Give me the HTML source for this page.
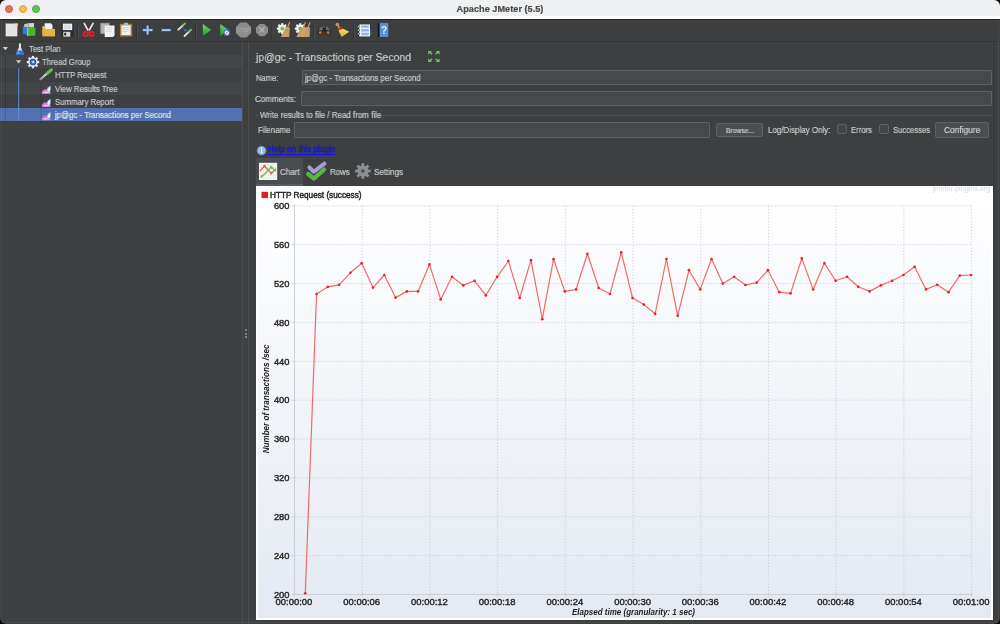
<!DOCTYPE html>
<html><head><meta charset="utf-8">
<style>
*{margin:0;padding:0;box-sizing:border-box}
html,body{width:1000px;height:624px;overflow:hidden;background:#000}
body{font-family:"Liberation Sans",sans-serif;position:relative}
.a{position:absolute}
svg{will-change:transform}
#win{position:absolute;left:0;top:0;width:1000px;height:624px;background:#3d3f41;border-radius:6px;overflow:hidden}
#title{left:0;top:0;width:1000px;height:19px;background:linear-gradient(#eff0f2 0,#eff0f2 16px,#f8f8f9 16px,#fdfdfd 17px,#fff 18px,#fff 18.6px,#232425 18.6px)}
#title .t{will-change:transform;left:0;top:4px;width:1000px;text-align:center;font-weight:bold;font-size:9.2px;color:#4a4a4a;line-height:11px}
.dot{width:8.4px;height:8.4px;border-radius:50%;top:5.1px}
#tb{left:0;top:19px;width:1000px;height:23px;background:#3d3e40;border-top:1px solid #232425;border-bottom:1px solid #363739}
.lbl{color:#bdbdbd;font-size:7.9px;line-height:10px;white-space:nowrap}
.field{background:#45494a;border:1px solid #5e6163;border-radius:1px}
.btn{border:1px solid #5e6163;border-radius:2px;background:#4a4e50;color:#bbbbbb;text-align:center}
.cb{width:10px;height:10px;border:1px solid #5e6163;border-radius:2px;background:#43474a}
.row{left:0;width:242px;height:13.2px}
.t{line-height:12px;white-space:nowrap;transform-origin:0 50%;will-change:transform;-webkit-text-stroke:0.2px currentColor}
</style></head><body>
<div id="win">
 <div id="title" class="a">
  <div class="a dot" style="left:5.1px;background:#ec6a5e;border:0.5px solid #d8564a"></div>
  <div class="a dot" style="left:18.6px;background:#f4bf4f;border:0.5px solid #dca13a"></div>
  <div class="a dot" style="left:31.8px;background:#61c554;border:0.5px solid #4ea83f"></div>
  <div class="a t">Apache JMeter (5.5)</div>
 </div>
 <div id="tb" class="a"></div>
<svg class="a" style="left:0;top:18px" width="400" height="24" viewBox="0 18 400 24">
<defs>
<linearGradient id="gGreen" x1="0" y1="0" x2="0" y2="1"><stop offset="0" stop-color="#7ed66a"/><stop offset="1" stop-color="#1f9a2a"/></linearGradient>
<linearGradient id="gFold" x1="0" y1="0" x2="0" y2="1"><stop offset="0" stop-color="#f2cc5a"/><stop offset="1" stop-color="#c8901e"/></linearGradient>
<linearGradient id="gBroom" x1="0" y1="0" x2="0" y2="1"><stop offset="0" stop-color="#f6e27a"/><stop offset="1" stop-color="#d9b224"/></linearGradient>
</defs>
<!-- separators -->
<g fill="#2f3133"><rect x="77" y="22.5" width="1" height="16"/><rect x="136" y="22.5" width="1" height="16"/><rect x="195" y="22.5" width="1" height="16"/><rect x="271.5" y="22.5" width="1" height="16"/><rect x="313" y="22.5" width="1" height="16"/><rect x="353" y="22.5" width="1" height="16"/></g>
<g fill="#4a4c4f"><rect x="78" y="22.5" width="1" height="16"/><rect x="137" y="22.5" width="1" height="16"/><rect x="196" y="22.5" width="1" height="16"/><rect x="272.5" y="22.5" width="1" height="16"/><rect x="314" y="22.5" width="1" height="16"/><rect x="354" y="22.5" width="1" height="16"/></g>
<!-- 1 new -->
<rect x="5.8" y="23.6" width="11.4" height="12.6" fill="#ececec" stroke="#9a9a9a" stroke-width="0.4"/>
<rect x="6.8" y="24.6" width="9.4" height="10.6" fill="#e2e2e2"/>
<circle cx="16.2" cy="25" r="1.8" fill="#f5e27a" opacity="0.9"/>
<!-- 2 templates -->
<path d="M24 24.5 L28.5 23 L28.5 27 L24 28Z" fill="#c8c8c8"/>
<path d="M28.5 23.2 L34 23 L34 27.5 L28.5 27.5Z" fill="#d4d4d4"/>
<path d="M22.9 26.5 L27.2 27 L27.4 35 L23 34Z" fill="#2f7fd6"/>
<path d="M27 27.4 L35.5 27.8 L35.3 35.5 L27.4 36.3Z" fill="#4fb52e"/>
<rect x="27" y="27.5" width="1.2" height="8.5" fill="#8ad46a"/>
<!-- 3 open -->
<path d="M44.6 23.3 L51 23.3 L52.5 25 L52.5 30 L44.6 30Z" fill="#f2f2f2"/>
<path d="M42.3 26.2 L45.5 26.2 L45.5 29 L55 29 L55 36.2 L42.3 36.2Z" fill="url(#gFold)"/>
<path d="M42.1 30.5 L55 30 L55 36.2 L42.8 36.2Z" fill="#e5b53c"/>
<!-- 4 save -->
<rect x="61.1" y="23" width="12.5" height="13.7" rx="1" fill="#2c2c2c"/>
<rect x="62.8" y="23.6" width="9.4" height="6.5" fill="#f4f4f4"/>
<rect x="63.8" y="24.6" width="7.4" height="4.8" fill="#d6e0ea"/>
<rect x="63.3" y="31.8" width="7" height="4.9" fill="#d8d8d8"/>
<rect x="64.3" y="32.8" width="1.8" height="2.6" fill="#222"/>
<!-- 5 cut -->
<path d="M84.2 23.4 L88.6 31.4 M93 23.4 L88.6 31.4" fill="none" stroke="#ececec" stroke-width="1.7" stroke-linecap="round"/>
<circle cx="85.6" cy="33.9" r="2.1" fill="none" stroke="#dc2222" stroke-width="1.9"/>
<circle cx="91.5" cy="33.9" r="2.1" fill="none" stroke="#dc2222" stroke-width="1.9"/>
<path d="M87 32.2 L88.6 31 L90.2 32.2" fill="none" stroke="#cc1e1e" stroke-width="1.5"/>
<!-- 6 copy -->
<rect x="100.3" y="22.9" width="9.3" height="11" fill="#9c9c9c"/>
<rect x="101.3" y="23.9" width="7.3" height="9" fill="#b4b4b4"/>
<path d="M104.7 25.5 L114.5 25.5 L114.5 35.5 L113 37.1 L104.7 37.1Z" fill="#f4f4f4"/>
<g fill="#c8c8c8"><rect x="106" y="27.5" width="6" height="0.6"/><rect x="106" y="29.5" width="6" height="0.6"/><rect x="106" y="31.5" width="6" height="0.6"/></g>
<!-- 7 paste -->
<rect x="119.9" y="23.8" width="12.3" height="12.7" rx="1" fill="#b07a26"/>
<rect x="121.4" y="25.3" width="9.2" height="9.8" fill="#eef2f8"/>
<g fill="#c4c4c4"><rect x="122.5" y="27" width="6" height="0.7"/><rect x="122.5" y="29" width="6" height="0.7"/><rect x="122.5" y="31" width="5" height="0.7"/></g>
<rect x="123.8" y="22.8" width="4.4" height="2.6" rx="1" fill="#b4b4b4"/>
<!-- 8 plus -->
<g fill="#a9c8ef" stroke="#4a7ac0" stroke-width="0.3"><rect x="142.9" y="29" width="9.6" height="2.1"/><rect x="146.6" y="25.6" width="2.1" height="9"/></g>
<!-- 9 minus -->
<rect x="161.8" y="29" width="9" height="2.1" fill="#a9c8ef" stroke="#4a7ac0" stroke-width="0.3"/>
<!-- 10 toggle -->
<path d="M178.3 29.7 L183 25.3" stroke="#e8e8e8" stroke-width="1.8" stroke-linecap="round"/>
<path d="M183 25.3 L185 23.6" stroke="#7ac85a" stroke-width="1.9" stroke-linecap="round"/>
<path d="M184.5 36 L189 31.7" stroke="#e8e8e8" stroke-width="1.8" stroke-linecap="round"/>
<path d="M189 31.7 L191 29.8" stroke="#7ac85a" stroke-width="1.9" stroke-linecap="round"/>
<path d="M183.2 28 L185.5 30.5" stroke="#3a7ae0" stroke-width="0.9"/>
<circle cx="185.6" cy="30.6" r="1" fill="#3a7ae0"/>
<!-- 11 start -->
<path d="M202.8 24.1 L211.2 29.9 L202.8 35.9Z" fill="url(#gGreen)"/>
<!-- 12 start no pause -->
<path d="M220.3 24.1 L228.7 29.9 L220.3 35.9Z" fill="url(#gGreen)"/>
<circle cx="226.8" cy="32.8" r="2.8" fill="#f4f4f4" stroke="#2f6fd0" stroke-width="1.1"/>
<path d="M224 35.6 L229.4 30.2" stroke="#e0302a" stroke-width="0.9"/>
<!-- 13 stop -->
<path d="M240.4 22.6 L246.6 22.6 L251.1 27 L251.1 33 L246.6 37.4 L240.4 37.4 L235.9 33 L235.9 27Z" fill="#8c8c8c"/>
<text x="243.5" y="32.3" text-anchor="middle" font-family="Liberation Sans" font-weight="bold" font-size="5.2" fill="#a4a4a4">STOP</text>
<!-- 14 shutdown -->
<path d="M259.6 23.9 L264.4 23.9 L268 27.5 L268 32.6 L264.4 36.2 L259.6 36.2 L256 32.6 L256 27.5Z" fill="#8a8a8a"/>
<path d="M259.5 27.5 L264.5 32.5 M264.5 27.5 L259.5 32.5" stroke="#b0b0b0" stroke-width="1.4"/>
<!-- 15 clear -->
<g transform="translate(282.2,28.6)"><circle r="4.2" fill="#eeeeee"/><g fill="#eeeeee"><rect x="-1.1" y="-5.4" width="2.2" height="10.8"/><rect x="-5.4" y="-1.1" width="10.8" height="2.2"/><rect x="-1.1" y="-5.4" width="2.2" height="10.8" transform="rotate(45)"/><rect x="-1.1" y="-5.4" width="2.2" height="10.8" transform="rotate(-45)"/></g><circle r="1.8" fill="#5cbc2c"/><circle r="0.7" cx="-0.4" cy="-0.5" fill="#a8e880"/></g>
<path d="M289.6 22.6 L287.6 27.5" stroke="#c49a64" stroke-width="1.3" stroke-linecap="round"/>
<path d="M285.6 27 L289.8 27.6 L289.2 37 L280.8 37 L282.6 33Z" fill="#c8a674"/>
<path d="M286 29 L283.5 36.5 M287.5 29 L286.5 36.5 M288.8 29 L288.5 36.5" stroke="#a88656" stroke-width="0.4"/>
<!-- 16 clear all -->
<g transform="translate(300.2,28.6)"><circle r="4.2" fill="#eeeeee"/><g fill="#eeeeee"><rect x="-1.1" y="-5.4" width="2.2" height="10.8"/><rect x="-5.4" y="-1.1" width="10.8" height="2.2"/><rect x="-1.1" y="-5.4" width="2.2" height="10.8" transform="rotate(45)"/><rect x="-1.1" y="-5.4" width="2.2" height="10.8" transform="rotate(-45)"/></g><circle r="1.8" fill="#5cbc2c"/></g>
<path d="M305.2 22.6 L303.4 27.5 M309.8 22.6 L308 27.5" stroke="#c49a64" stroke-width="1.3" stroke-linecap="round"/>
<path d="M301.4 27 L305.4 27.6 L305 37 L296.4 37 L298.4 33Z" fill="#c8a674"/>
<path d="M306 27 L310 27.6 L309.6 37 L301.2 37 L303 33Z" fill="#c4a270"/>
<path d="M302 29 L299.5 36.5 M307.5 29 L305 36.5 M309 29 L308.5 36.5" stroke="#a88656" stroke-width="0.4"/>
<!-- 17 binoculars -->
<path d="M317 32.6 L320.4 26 Q321.8 25 323.3 26.2 L323.8 33 Q323.4 35.6 320.3 35.4 Q316.8 35.2 317 32.6Z" fill="#2e2e2e"/>
<path d="M331.7 32.6 L328.3 26 Q326.9 25 325.4 26.2 L324.9 33 Q325.3 35.6 328.4 35.4 Q331.9 35.2 331.7 32.6Z" fill="#2e2e2e"/>
<path d="M318.6 30.6 L320.8 26.6 Q321.8 26 322.6 26.8 L322.8 30Z" fill="#6a6a6a"/>
<path d="M330.1 30.6 L327.9 26.6 Q326.9 26 326.1 26.8 L325.9 30Z" fill="#6a6a6a"/>
<rect x="323.2" y="26.8" width="2.3" height="4.5" fill="#222"/>
<circle cx="324.35" cy="27" r="1.1" fill="#555"/>
<circle cx="320.4" cy="32.7" r="1.8" fill="#a0521e"/><circle cx="328.3" cy="32.7" r="1.8" fill="#a0521e"/>
<circle cx="320.1" cy="32.3" r="0.6" fill="#e8a060"/><circle cx="328" cy="32.3" r="0.6" fill="#e8a060"/>
<!-- 18 broom -->
<circle cx="337.4" cy="24.5" r="1.8" fill="#c8985a"/>
<path d="M337.5 25 L339.8 28.5" stroke="#c8985a" stroke-width="1.6"/>
<path d="M337.2 28.8 L342 26.8 L343 29 L338.5 31Z" fill="#d42a20"/>
<path d="M338.5 30.5 L343 28.8 L349.3 31.8 L341.6 36.9Z" fill="url(#gBroom)"/>
<!-- 19 function helper -->
<rect x="358.4" y="23.8" width="12.2" height="13.3" rx="0.6" fill="#2a2a2a"/>
<rect x="359.2" y="24.4" width="10.8" height="12.1" fill="#f2f4f6"/>
<g fill="#8db4ee"><rect x="361.2" y="25.4" width="7.6" height="2.4"/><rect x="361.2" y="29.1" width="7.6" height="2.4"/><rect x="361.2" y="32.8" width="7.6" height="2.4"/></g>
<g fill="#fafafa" stroke="#1e1e1e" stroke-width="0.55"><circle cx="358.6" cy="26.4" r="1"/><circle cx="358.6" cy="30.1" r="1"/><circle cx="358.6" cy="33.8" r="1"/></g>
<rect x="370.3" y="29.4" width="1.1" height="2.6" fill="#2a62d8"/><rect x="370.3" y="32.2" width="1.1" height="2.6" fill="#2ca82c"/>
<!-- 20 help -->
<rect x="377.8" y="23.1" width="2.4" height="13.8" fill="#151515"/>
<rect x="379.6" y="23.1" width="8.7" height="13.8" fill="#5b8fd8"/>
<text x="384" y="33.6" text-anchor="middle" font-family="Liberation Sans" font-weight="bold" font-size="10" fill="#e4ecf8">?</text>
</svg>
 <!-- tree panel -->
 <div class="a row" style="top:55.2px;background:#414548"></div>
 <div class="a row" style="top:81.6px;background:#414548"></div>
 <div class="a row" style="top:108px;background:#5171b1"></div>
<svg class="a" style="left:0;top:0" width="250" height="130">
<defs>
<linearGradient id="gPip" x1="0" y1="1" x2="1" y2="0"><stop offset="0" stop-color="#9a9a9a"/><stop offset="1" stop-color="#f0f0f0"/></linearGradient>
</defs>
<!-- expand triangles -->
<path d="M2.7 47.1 L8.1 47.1 L5.4 50.2Z" fill="#cfcfcf"/>
<path d="M15.9 60.3 L21.3 60.3 L18.6 63.4Z" fill="#cfcfcf"/>
<!-- guide lines -->
<rect x="5" y="55" width="1" height="66" fill="#000" opacity="0.13"/>
<rect x="18.2" y="68" width="1" height="53" fill="#5b8fd0"/>
<rect x="40.5" y="82" width="1" height="39" fill="#000" opacity="0.13"/>
<!-- flask -->
<path d="M19 43.6 L20.9 43.2 L20.9 47.2 L23.6 53.6 Q24 55 22.6 55 L17 55 Q15.6 55 16 53.6 L19 47.2Z" fill="#dcdcdc"/>
<path d="M19.4 44 L20.4 44 L20.4 47.8 L19.4 47.8Z" fill="#f6f6f6"/>
<path d="M17.6 50.4 L22.1 50.4 L23.6 53.6 Q24 55 22.6 55 L17 55 Q15.6 55 16 53.6Z" fill="#2d6fd8"/>
<path d="M18.2 51.4 L20 51.4 L19.2 54 L17.2 54Z" fill="#6aa2ee"/>
<!-- gear -->
<g transform="translate(33,62.1)"><circle r="4.8" fill="#ededed"/><g fill="#ededed"><rect x="-1.1" y="-6.2" width="2.2" height="12.4"/><rect x="-6.2" y="-1.1" width="12.4" height="2.2"/><rect x="-1.1" y="-6.2" width="2.2" height="12.4" transform="rotate(45)"/><rect x="-1.1" y="-6.2" width="2.2" height="12.4" transform="rotate(-45)"/></g><circle r="3.3" fill="#2c4f8e"/><circle r="2.3" fill="#4f7cc4"/><circle r="1.1" cx="0.2" cy="-0.1" fill="#e6eef8"/></g>
<!-- pipette -->
<path d="M40.5 79.3 L47.5 73" stroke="url(#gPip)" stroke-width="2.2" stroke-linecap="round"/>
<path d="M47.3 73.3 L51.3 69.9" stroke="#6cb854" stroke-width="3.2" stroke-linecap="round"/>
<!-- chart icons -->
<g id="ci">
<path d="M41.8 93.9 L41.8 91.6 Q43.6 89.2 45.6 88.9 L50.4 91.2 L50.4 93.9Z" fill="#de6fd0"/>
<path d="M42.6 93.1 Q44.4 91.2 46 91.3 L49.8 92.6 L49.8 93.1Z" fill="#f4c6ee"/>
<path d="M50.5 85.5 Q46.9 87.3 46.7 90.3 Q46.8 92.4 48.9 92.3 Q50.5 92 50.5 89.8Z" fill="#8fb6e8"/>
<path d="M50.2 86.4 Q47.6 88 47.5 90.3 Q47.6 91.6 48.9 91.5 Q50.2 91.3 50.2 89.8Z" fill="#e8f2fc"/>
</g>
<use href="#ci" y="13.2"/>
<use href="#ci" y="26.4"/>
</svg>
 <div id="rcol" class="a" style="left:993px;top:42px;width:2px;height:582px;background:#393b3d"></div>
 <!-- splitter -->
 <div class="a" style="left:242px;top:42px;width:1px;height:582px;background:#4a4c4e"></div>
 <div class="a" style="left:248px;top:42px;width:1px;height:582px;background:#4a4c4e"></div>
 <div class="a" style="left:245px;top:329px;width:2px;height:2px;border-radius:1px;background:#9a9a9a"></div>
 <div class="a" style="left:245px;top:332.5px;width:2px;height:2px;border-radius:1px;background:#9a9a9a"></div>
 <div class="a" style="left:245px;top:336px;width:2px;height:2px;border-radius:1px;background:#9a9a9a"></div>

 <!-- right panel -->
 <svg class="a" style="left:426px;top:49px" width="16" height="15" viewBox="426 49 16 15">
  <g fill="#6cc85c">
   <path d="M428.2 51 L432 51 L430.9 52.1 L432.6 53.8 L431.6 54.8 L429.9 53.1 L428.2 54.8Z"/>
   <path d="M439.6 51 L435.8 51 L436.9 52.1 L435.2 53.8 L436.2 54.8 L437.9 53.1 L439.6 54.8Z"/>
   <path d="M428.2 62 L432 62 L430.9 60.9 L432.6 59.2 L431.6 58.2 L429.9 59.9 L428.2 58.2Z"/>
   <path d="M439.6 62 L435.8 62 L436.9 60.9 L435.2 59.2 L436.2 58.2 L437.9 59.9 L439.6 58.2Z"/>
  </g>
 </svg>
 <div class="a field" style="left:302px;top:70px;width:690px;height:15px"></div>
 <div class="a field" style="left:301px;top:91px;width:691px;height:15px"></div>
 <div class="a" style="left:256px;top:115px;width:3px;height:1px;background:#4f5254"></div>
 <div class="a" style="left:382px;top:115px;width:610px;height:1px;background:#4f5254"></div>
 <div class="a field" style="left:294px;top:122px;width:416px;height:16px"></div>
 <div class="a btn lbl" style="left:716px;top:123px;width:47px;height:14px;font-size:6.8px;line-height:12px"></div>
 <div class="a cb" style="left:837px;top:124px"></div>
 <div class="a cb" style="left:879px;top:124px"></div>
 <div class="a btn lbl" style="left:935px;top:122px;width:54px;height:16px;font-size:8.37px;line-height:14px"></div>

 <!-- help -->
 <svg class="a" style="left:255px;top:144px" width="14" height="14" viewBox="255 144 14 14">
  <circle cx="261.5" cy="150.6" r="4.4" fill="#9dbde6" stroke="#6c8fc4" stroke-width="0.6"/>
  <rect x="261" y="149.2" width="1.1" height="3.8" fill="#fff"/><circle cx="261.55" cy="147.9" r="0.65" fill="#fff"/>
 </svg>

 <!-- tabs -->
 <div class="a" style="left:256px;top:157.5px;width:46.5px;height:26.5px;background:#4a4d50"></div>
 <div class="a" style="left:256px;top:184px;width:46.5px;height:2px;background:#5a5d60"></div>
 <svg class="a" style="left:254px;top:156px" width="130" height="30" viewBox="254 156 130 30">
  <rect x="259" y="162.8" width="18.2" height="17.2" fill="#f7f7f7"/>
  <g stroke="#e2e2e2" stroke-width="0.5">
   <path d="M261 163v17M263.5 163v17M266 163v17M268.5 163v17M271 163v17M273.5 163v17M276 163v17"/>
   <path d="M259 165h18M259 167.5h18M259 170h18M259 172.5h18M259 175h18M259 177.5h18"/>
  </g>
  <polyline points="260,171.2 264.4,166 271.2,173.2 276,168.6" fill="none" stroke="#d86048" stroke-width="1.2"/>
  <polyline points="261.4,176.6 264.6,174.2 271.2,167.2 276,171.4" fill="none" stroke="#6ab84a" stroke-width="1.2"/>
  <g fill="none" stroke-width="0.8"><circle cx="264.4" cy="166" r="1" stroke="#d86048"/><circle cx="271.2" cy="173.2" r="1" stroke="#d86048"/><circle cx="271.2" cy="167.2" r="1" stroke="#6ab84a"/><circle cx="261.6" cy="176.4" r="1" stroke="#6ab84a"/></g>
  <path d="M309.4 167.4 L313.8 171.8 L324.4 163.6" fill="none" stroke="#a49ed8" stroke-width="3.9" stroke-linecap="round" stroke-linejoin="round"/>
  <path d="M308.2 174 L313.8 178.6 L324 169.6" fill="none" stroke="#58b446" stroke-width="4.3" stroke-linecap="round" stroke-linejoin="round"/>
  <g transform="translate(362.9,171)">
   <circle r="5.6" fill="#8b9192"/>
   <g fill="#8b9192"><rect x="-1.4" y="-7.8" width="2.8" height="15.6"/><rect x="-7.8" y="-1.4" width="15.6" height="2.8"/><rect x="-1.4" y="-7.8" width="2.8" height="15.6" transform="rotate(45)"/><rect x="-1.4" y="-7.8" width="2.8" height="15.6" transform="rotate(-45)"/></g>
   <circle r="3" fill="#7d8384"/><circle r="1.3" fill="#3a3c3e"/>
  </g>
 </svg>

 <!-- chart -->
 <div class="a" style="left:256px;top:186px;width:737px;height:434px;background:#fff"></div>
 <div class="a" style="left:258px;top:188px;width:733px;height:430px;background:linear-gradient(#ffffff,#e4e9f2)"></div>
 <div class="a t" style="left:28.60px;top:43.19px;font-size:8.4px;color:#cbcbcb;font-weight:normal;transform:scaleX(0.920);">Test Plan</div>
 <div class="a t" style="left:42.00px;top:56.39px;font-size:8.4px;color:#cbcbcb;font-weight:normal;transform:scaleX(0.930);">Thread Group</div>
 <div class="a t" style="left:55.20px;top:69.49px;font-size:8.4px;color:#cbcbcb;font-weight:normal;transform:scaleX(0.930);">HTTP Request</div>
 <div class="a t" style="left:55.20px;top:82.89px;font-size:8.4px;color:#cbcbcb;font-weight:normal;transform:scaleX(0.930);">View Results Tree</div>
 <div class="a t" style="left:55.20px;top:95.99px;font-size:8.4px;color:#cbcbcb;font-weight:normal;transform:scaleX(0.930);">Summary Report</div>
 <div class="a t" style="left:55.00px;top:109.19px;font-size:8.4px;color:#dfe5ee;font-weight:normal;transform:scaleX(0.936);">jp@gc - Transactions per Second</div>
 <div class="a t" style="left:255.60px;top:50.63px;font-size:11.45px;color:#d0d0d0;font-weight:normal;transform:scaleX(0.916);">jp@gc - Transactions per Second</div>
 <div class="a t" style="left:255.60px;top:72.09px;font-size:8.4px;color:#cbcbcb;font-weight:normal;transform:scaleX(0.905);">Name:</div>
 <div class="a t" style="left:305.00px;top:72.09px;font-size:8.4px;color:#cbcbcb;font-weight:normal;transform:scaleX(0.932);">jp@gc - Transactions per Second</div>
 <div class="a t" style="left:255.20px;top:93.09px;font-size:8.4px;color:#cbcbcb;font-weight:normal;transform:scaleX(0.959);">Comments:</div>
 <div class="a t" style="left:260.00px;top:108.89px;font-size:8.4px;color:#cbcbcb;font-weight:normal;transform:scaleX(0.948);">Write results to file / Read from file</div>
 <div class="a t" style="left:258.00px;top:123.89px;font-size:8.4px;color:#cbcbcb;font-weight:normal;transform:scaleX(0.944);">Filename</div>
 <div class="a t" style="left:725.50px;top:124.61px;font-size:7.2px;color:#cbcbcb;font-weight:normal;transform:scaleX(0.940);">Browse...</div>
 <div class="a t" style="left:767.80px;top:124.45px;font-size:8.8px;color:#cbcbcb;font-weight:normal;transform:scaleX(0.905);">Log/Display Only:</div>
 <div class="a t" style="left:850.90px;top:124.09px;font-size:8.4px;color:#cbcbcb;font-weight:normal;transform:scaleX(0.923);">Errors</div>
 <div class="a t" style="left:892.80px;top:124.09px;font-size:8.4px;color:#cbcbcb;font-weight:normal;transform:scaleX(0.916);">Successes</div>
 <div class="a t" style="left:944.00px;top:124.44px;font-size:9.4px;color:#d0d0d0;font-weight:normal;transform:scaleX(0.891);">Configure</div>
 <div class="a t" style="left:268.00px;top:144.36px;font-size:8.2px;color:#1212f4;font-weight:normal;transform:scaleX(0.998);text-decoration:underline;text-decoration-skip-ink:none;text-underline-offset:1.6px;-webkit-text-stroke:0.35px #1212f4;">Help on this plugin</div>
 <div class="a t" style="left:279.60px;top:165.89px;font-size:8.4px;color:#cbcbcb;font-weight:normal;transform:scaleX(0.959);">Chart</div>
 <div class="a t" style="left:329.50px;top:165.89px;font-size:8.4px;color:#cbcbcb;font-weight:normal;transform:scaleX(0.938);">Rows</div>
 <div class="a t" style="left:374.00px;top:165.69px;font-size:8.4px;color:#cbcbcb;font-weight:normal;transform:scaleX(0.959);">Settings</div>
<svg class="a" style="left:0;top:0" width="1000" height="624">
<g stroke="#c6c9d0" stroke-width="1" stroke-dasharray="1 2"><line x1="294.5" y1="205.80" x2="971.60" y2="205.80"/><line x1="294.5" y1="244.67" x2="971.60" y2="244.67"/><line x1="294.5" y1="283.54" x2="971.60" y2="283.54"/><line x1="294.5" y1="322.41" x2="971.60" y2="322.41"/><line x1="294.5" y1="361.28" x2="971.60" y2="361.28"/><line x1="294.5" y1="400.15" x2="971.60" y2="400.15"/><line x1="294.5" y1="439.02" x2="971.60" y2="439.02"/><line x1="294.5" y1="477.89" x2="971.60" y2="477.89"/><line x1="294.5" y1="516.76" x2="971.60" y2="516.76"/><line x1="294.5" y1="555.63" x2="971.60" y2="555.63"/><line x1="362.21" y1="205.8" x2="362.21" y2="594.50"/><line x1="429.92" y1="205.8" x2="429.92" y2="594.50"/><line x1="497.63" y1="205.8" x2="497.63" y2="594.50"/><line x1="565.34" y1="205.8" x2="565.34" y2="594.50"/><line x1="633.05" y1="205.8" x2="633.05" y2="594.50"/><line x1="700.76" y1="205.8" x2="700.76" y2="594.50"/><line x1="768.47" y1="205.8" x2="768.47" y2="594.50"/><line x1="836.18" y1="205.8" x2="836.18" y2="594.50"/><line x1="903.89" y1="205.8" x2="903.89" y2="594.50"/><line x1="971.60" y1="205.8" x2="971.60" y2="594.50"/></g>
<g stroke="#cbcfd7" stroke-width="1"><line x1="294.5" y1="204.8" x2="294.5" y2="595.00"/><line x1="294.5" y1="594.50" x2="971.60" y2="594.50"/>
<line x1="292.0" y1="205.80" x2="294.5" y2="205.80"/>
<line x1="292.0" y1="244.67" x2="294.5" y2="244.67"/>
<line x1="292.0" y1="283.54" x2="294.5" y2="283.54"/>
<line x1="292.0" y1="322.41" x2="294.5" y2="322.41"/>
<line x1="292.0" y1="361.28" x2="294.5" y2="361.28"/>
<line x1="292.0" y1="400.15" x2="294.5" y2="400.15"/>
<line x1="292.0" y1="439.02" x2="294.5" y2="439.02"/>
<line x1="292.0" y1="477.89" x2="294.5" y2="477.89"/>
<line x1="292.0" y1="516.76" x2="294.5" y2="516.76"/>
<line x1="292.0" y1="555.63" x2="294.5" y2="555.63"/>
<line x1="292.0" y1="594.50" x2="294.5" y2="594.50"/>
<line x1="294.50" y1="592.50" x2="294.50" y2="596.50"/>
<line x1="362.21" y1="592.50" x2="362.21" y2="596.50"/>
<line x1="429.92" y1="592.50" x2="429.92" y2="596.50"/>
<line x1="497.63" y1="592.50" x2="497.63" y2="596.50"/>
<line x1="565.34" y1="592.50" x2="565.34" y2="596.50"/>
<line x1="633.05" y1="592.50" x2="633.05" y2="596.50"/>
<line x1="700.76" y1="592.50" x2="700.76" y2="596.50"/>
<line x1="768.47" y1="592.50" x2="768.47" y2="596.50"/>
<line x1="836.18" y1="592.50" x2="836.18" y2="596.50"/>
<line x1="903.89" y1="592.50" x2="903.89" y2="596.50"/>
<line x1="971.60" y1="592.50" x2="971.60" y2="596.50"/>
</g>
<g font-family="Liberation Sans" font-size="9.0" fill="#2a2a2a" stroke="#2a2a2a" stroke-width="0.42"><text x="273.90" y="209.10" textLength="15.6" lengthAdjust="spacingAndGlyphs">600</text><text x="273.90" y="247.97" textLength="15.6" lengthAdjust="spacingAndGlyphs">560</text><text x="273.90" y="286.84" textLength="15.6" lengthAdjust="spacingAndGlyphs">520</text><text x="273.90" y="325.71" textLength="15.6" lengthAdjust="spacingAndGlyphs">480</text><text x="273.90" y="364.58" textLength="15.6" lengthAdjust="spacingAndGlyphs">440</text><text x="273.90" y="403.45" textLength="15.6" lengthAdjust="spacingAndGlyphs">400</text><text x="273.90" y="442.32" textLength="15.6" lengthAdjust="spacingAndGlyphs">360</text><text x="273.90" y="481.19" textLength="15.6" lengthAdjust="spacingAndGlyphs">320</text><text x="273.90" y="520.06" textLength="15.6" lengthAdjust="spacingAndGlyphs">280</text><text x="273.90" y="558.93" textLength="15.6" lengthAdjust="spacingAndGlyphs">240</text><text x="273.90" y="597.80" textLength="15.6" lengthAdjust="spacingAndGlyphs">200</text><text x="275.60" y="605.4" textLength="36.8" lengthAdjust="spacingAndGlyphs">00:00:00</text><text x="343.31" y="605.4" textLength="36.8" lengthAdjust="spacingAndGlyphs">00:00:06</text><text x="411.02" y="605.4" textLength="36.8" lengthAdjust="spacingAndGlyphs">00:00:12</text><text x="478.73" y="605.4" textLength="36.8" lengthAdjust="spacingAndGlyphs">00:00:18</text><text x="546.44" y="605.4" textLength="36.8" lengthAdjust="spacingAndGlyphs">00:00:24</text><text x="614.15" y="605.4" textLength="36.8" lengthAdjust="spacingAndGlyphs">00:00:30</text><text x="681.86" y="605.4" textLength="36.8" lengthAdjust="spacingAndGlyphs">00:00:36</text><text x="749.57" y="605.4" textLength="36.8" lengthAdjust="spacingAndGlyphs">00:00:42</text><text x="817.28" y="605.4" textLength="36.8" lengthAdjust="spacingAndGlyphs">00:00:48</text><text x="884.99" y="605.4" textLength="36.8" lengthAdjust="spacingAndGlyphs">00:00:54</text><text x="952.70" y="605.4" textLength="36.8" lengthAdjust="spacingAndGlyphs">00:01:00</text></g>
<text x="572" y="614.8" textLength="123" lengthAdjust="spacingAndGlyphs" font-family="Liberation Sans" font-size="8.3" font-weight="bold" font-style="italic" fill="#222">Elapsed time (granularity: 1 sec)</text>
<text transform="translate(269.4,453.3) rotate(-90)" x="0" y="0" textLength="108.7" lengthAdjust="spacingAndGlyphs" font-family="Liberation Sans" font-size="8.6" font-weight="bold" font-style="italic" fill="#222">Number of transactions /sec</text>
<rect x="261.5" y="191.8" width="6.5" height="6.3" fill="#e41e1e"/>
<text x="270" y="198.3" textLength="91.5" lengthAdjust="spacingAndGlyphs" font-family="Liberation Sans" font-size="8.4" fill="#222" stroke="#222" stroke-width="0.42">HTTP Request (success)</text>
<text x="933" y="191" textLength="57" lengthAdjust="spacingAndGlyphs" font-family="Liberation Sans" font-size="7.6" fill="#d9dde4" stroke="#d9dde4" stroke-width="0.2">jmeter-plugins.org</text>
<polyline fill="none" stroke="#f06a6a" stroke-width="1.2" stroke-linejoin="round" points="305.29,593.25 316.57,294.00 327.86,286.80 339.14,284.80 350.43,272.80 361.71,263.20 373.00,287.60 384.28,275.00 395.56,297.60 406.85,291.40 418.13,291.40 429.42,264.40 440.71,299.40 451.99,276.80 463.27,285.40 474.56,280.80 485.85,295.40 497.13,276.80 508.41,261.00 519.70,298.00 530.99,260.20 542.27,319.20 553.56,259.20 564.84,291.40 576.12,289.40 587.41,253.80 598.69,288.00 609.98,294.00 621.26,252.40 632.55,298.00 643.84,304.60 655.12,313.80 666.40,259.00 677.69,315.80 688.98,270.20 700.26,289.40 711.55,259.00 722.83,283.60 734.12,276.80 745.40,285.00 756.68,282.60 767.97,270.20 779.25,292.20 790.54,293.40 801.83,258.40 813.11,289.40 824.39,263.00 835.68,280.80 846.97,276.80 858.25,286.80 869.53,291.40 880.82,285.40 892.11,280.80 903.39,275.00 914.67,266.80 925.96,289.40 937.25,284.80 948.53,292.20 959.82,275.60 971.10,275.00"/>
<g fill="#e8242a"><circle cx="305.29" cy="593.25" r="1.35"/><circle cx="316.57" cy="294.00" r="1.35"/><circle cx="327.86" cy="286.80" r="1.35"/><circle cx="339.14" cy="284.80" r="1.35"/><circle cx="350.43" cy="272.80" r="1.35"/><circle cx="361.71" cy="263.20" r="1.35"/><circle cx="373.00" cy="287.60" r="1.35"/><circle cx="384.28" cy="275.00" r="1.35"/><circle cx="395.56" cy="297.60" r="1.35"/><circle cx="406.85" cy="291.40" r="1.35"/><circle cx="418.13" cy="291.40" r="1.35"/><circle cx="429.42" cy="264.40" r="1.35"/><circle cx="440.71" cy="299.40" r="1.35"/><circle cx="451.99" cy="276.80" r="1.35"/><circle cx="463.27" cy="285.40" r="1.35"/><circle cx="474.56" cy="280.80" r="1.35"/><circle cx="485.85" cy="295.40" r="1.35"/><circle cx="497.13" cy="276.80" r="1.35"/><circle cx="508.41" cy="261.00" r="1.35"/><circle cx="519.70" cy="298.00" r="1.35"/><circle cx="530.99" cy="260.20" r="1.35"/><circle cx="542.27" cy="319.20" r="1.35"/><circle cx="553.56" cy="259.20" r="1.35"/><circle cx="564.84" cy="291.40" r="1.35"/><circle cx="576.12" cy="289.40" r="1.35"/><circle cx="587.41" cy="253.80" r="1.35"/><circle cx="598.69" cy="288.00" r="1.35"/><circle cx="609.98" cy="294.00" r="1.35"/><circle cx="621.26" cy="252.40" r="1.35"/><circle cx="632.55" cy="298.00" r="1.35"/><circle cx="643.84" cy="304.60" r="1.35"/><circle cx="655.12" cy="313.80" r="1.35"/><circle cx="666.40" cy="259.00" r="1.35"/><circle cx="677.69" cy="315.80" r="1.35"/><circle cx="688.98" cy="270.20" r="1.35"/><circle cx="700.26" cy="289.40" r="1.35"/><circle cx="711.55" cy="259.00" r="1.35"/><circle cx="722.83" cy="283.60" r="1.35"/><circle cx="734.12" cy="276.80" r="1.35"/><circle cx="745.40" cy="285.00" r="1.35"/><circle cx="756.68" cy="282.60" r="1.35"/><circle cx="767.97" cy="270.20" r="1.35"/><circle cx="779.25" cy="292.20" r="1.35"/><circle cx="790.54" cy="293.40" r="1.35"/><circle cx="801.83" cy="258.40" r="1.35"/><circle cx="813.11" cy="289.40" r="1.35"/><circle cx="824.39" cy="263.00" r="1.35"/><circle cx="835.68" cy="280.80" r="1.35"/><circle cx="846.97" cy="276.80" r="1.35"/><circle cx="858.25" cy="286.80" r="1.35"/><circle cx="869.53" cy="291.40" r="1.35"/><circle cx="880.82" cy="285.40" r="1.35"/><circle cx="892.11" cy="280.80" r="1.35"/><circle cx="903.39" cy="275.00" r="1.35"/><circle cx="914.67" cy="266.80" r="1.35"/><circle cx="925.96" cy="289.40" r="1.35"/><circle cx="937.25" cy="284.80" r="1.35"/><circle cx="948.53" cy="292.20" r="1.35"/><circle cx="959.82" cy="275.60" r="1.35"/><circle cx="971.10" cy="275.00" r="1.35"/></g>
</svg> <div class="a" id="rim" style="left:1px;top:19px;width:998px;height:604px;border:1px solid rgba(255,255,255,0.05);border-top:none;border-radius:0 0 5px 5px;pointer-events:none"></div>
</div>
</body></html>
